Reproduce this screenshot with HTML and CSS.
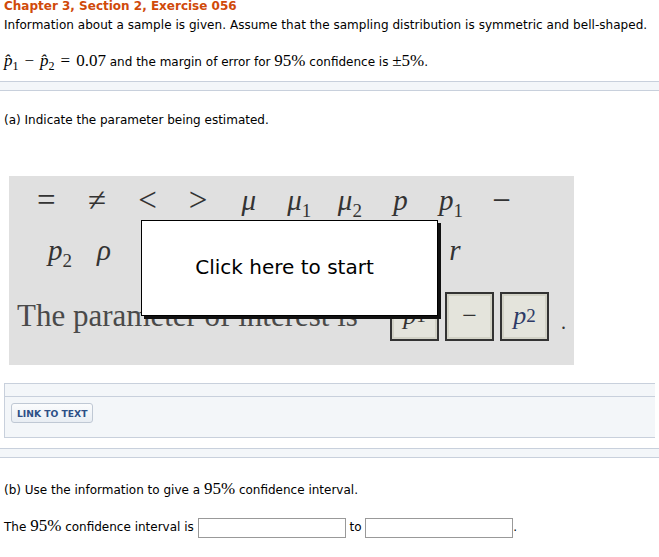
FILE: index.html
```html
<!DOCTYPE html>
<html>
<head>
<meta charset="utf-8">
<link rel="stylesheet" href="styles.css">
</head>
<body>
<div class="page">
  <h1 class="title">Chapter 3, Section 2, Exercise 056</h1>
  <p class="intro">Information about a sample is given. Assume that the sampling distribution is symmetric and bell-shaped.</p>
  <p class="given"><span class="m"><i>p̂</i><sub>1</sub><span class="op">−</span><i>p̂</i><sub>2</sub><span class="op">=</span>0.07</span> and the margin of error for <span class="m">95%</span> confidence is <span class="m">±5%</span>.</p>
</div>
<div class="band"></div>
<div class="page">
  <p class="part-a">(a) Indicate the parameter being estimated.</p>
  <div class="palette">
    <div class="row row1">
      <span class="sym rel">=</span><span class="sym rel">≠</span><span class="sym rel">&lt;</span><span class="sym rel">&gt;</span>
      <span class="sym"><i>μ</i></span><span class="sym"><i>μ</i><sub>1</sub></span><span class="sym"><i>μ</i><sub>2</sub></span>
      <span class="sym"><i>p</i></span><span class="sym"><i>p</i><sub>1</sub></span><span class="sym rel">−</span>
    </div>
    <div class="row row2">
      <span class="sym"><i>p</i><sub>2</sub></span><span class="sym"><i>ρ</i></span>
      <span class="spacer"></span>
      <span class="sym"><i>r</i></span>
    </div>
    <div class="row row3">
      <span class="sentence">The parameter of interest is</span>
      <span class="slot"><i>p</i><sub>1</sub></span><span class="slot">−</span><span class="slot slot-blue"><i>p</i><sub>2</sub></span><span class="dot">.</span>
    </div>
    <div class="start">Click here to start</div>
  </div>
  <div class="panel">
    <div class="panel-head"></div>
    <div class="panel-body"><span class="btn">LINK TO TEXT</span></div>
  </div>
</div>
<div class="band band2"></div>
<div class="page">
  <p class="part-b">(b) Use the information to give a <span class="m">95%</span> confidence interval.</p>
  <p class="answer">The <span class="m">95%</span> confidence interval is <span class="input"></span> to <span class="input"></span>.</p>
</div>
</body>
</html>
```
FILE: styles.css
```css
html, body { margin: 0; padding: 0; background: #fff; }
body { font-family: "DejaVu Sans", Verdana, sans-serif; font-size: 12px; color: #000; }
.page { padding: 0 4px; }
.title { margin: -1px 0 0; font-size: 12px; font-weight: bold; color: #d04a0a; line-height: 14px; }
.intro { margin: 5px 0 0; line-height: 14px; letter-spacing: 0.04px; }
.given { margin: 20px 0 0; height: 18px; line-height: 18px; }
.m { font-family: "Liberation Serif", "DejaVu Serif", serif; font-size: 17px; line-height: 1; }
.m sub { font-size: 12px; line-height: 0; }
.m .op { margin: 0 6px; }
.band { height: 8px; background: #f3f6f9; border-top: 1px solid #c8d0dc; border-bottom: 1px solid #c8d0dc; margin-top: 11px; }
.part-a { margin: 22px 0 0; height: 14px; line-height: 14px; }
.palette { position: relative; margin: 49px 0 0 5px; width: 565px; height: 189px; background: #e0e0e0; font-family: "Liberation Serif", "DejaVu Serif", serif; color: #333; }
.row { display: flex; align-items: center; box-sizing: border-box; }
.sym { font-size: 29px; text-align: center; line-height: 1; }
.sym.rel { font-size: 33px; font-weight: 300; }
.sym sub, .slot sub { font-size: 19px; line-height: 0; }
.row1 { height: 52px; padding-left: 12px; padding-bottom: 4px; }
.row1 .sym { width: 50.6px; }
.row2 { height: 56px; padding-left: 29px; padding-bottom: 12px; }
.row2 .sym { width: 44px; }
.row2 .spacer { width: 307px; }
.row3 { height: 64px; padding-left: 8px; }
.sentence { font-size: 31px; color: #4a4a4a; width: 373px; white-space: nowrap; overflow: hidden; }
.slot { width: 45px; height: 45px; border: 2px solid #333; background: #e4e4dc; box-shadow: inset 0 0 0 2px #d2d2c6; display: flex; align-items: center; justify-content: center; font-size: 26px; margin-right: 6px; color: #333; line-height: 1; }
.slot-blue { color: #2d3a66; }
.dot { font-size: 20px; margin-left: 6px; padding-top: 12px; }
.start { position: absolute; left: 132px; top: 44px; width: 297px; height: 96px; box-sizing: border-box; padding: 0 10px 2px 0; background: #fff; border: 1px solid #000; box-shadow: 3px 3px 0 #111; font-family: "DejaVu Sans", Verdana, sans-serif; font-size: 20px; color: #000; display: flex; align-items: center; justify-content: center; }
.panel { margin-top: 18px; border: 1px solid #c8d0dc; border-right: none; background: #f3f6f9; }
.panel-head { height: 12px; border-bottom: 1px solid #c8d0dc; }
.panel-body { height: 40px; padding: 6px 0 0 6px; box-sizing: border-box; }
.btn { display: inline-block; padding: 4px 5px 3px; font-size: 9.2px; font-weight: bold; color: #2d4f86; background: linear-gradient(#fbfcfd, #e8edf3); border: 1px solid #bfc8d4; border-radius: 3px; line-height: 11px; }
.band2 { margin-top: 10px; }
.part-b { margin: 22px 0 0; height: 16px; line-height: 16px; }
.answer { margin: 20px 0 0; line-height: 22px; }
.input { display: inline-block; width: 146px; height: 18px; border: 1px solid #999; vertical-align: middle; background: #fff; }
```
